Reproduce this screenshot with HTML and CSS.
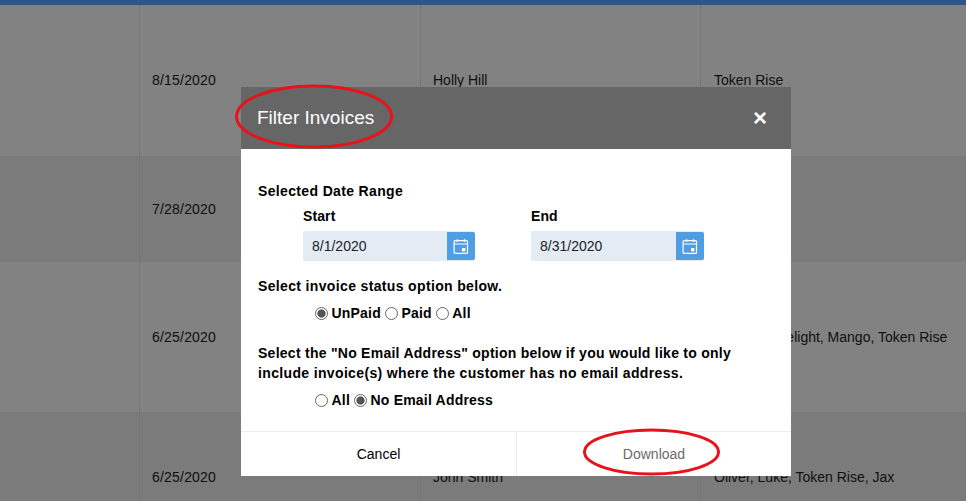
FILE: index.html
```html
<!DOCTYPE html>
<html lang="en">
<head>
  <meta charset="UTF-8" />
  <title>Filter Invoices</title>
  <link rel="stylesheet" href="styles.css">
</head>
<body>
  <div class="topbar"></div>

  <div class="table">
    <div class="row row-a">
      <div class="cell"></div>
      <div class="cell date">8/15/2020</div>
      <div class="cell">Holly Hill</div>
      <div class="cell">Token Rise</div>
    </div>
    <div class="row row-b">
      <div class="cell"></div>
      <div class="cell date">7/28/2020</div>
      <div class="cell"></div>
      <div class="cell"></div>
    </div>
    <div class="row row-c">
      <div class="cell"></div>
      <div class="cell date">6/25/2020</div>
      <div class="cell"></div>
      <div class="cell">Peaches, Delight, Mango, Token Rise</div>
    </div>
    <div class="row row-d">
      <div class="cell"></div>
      <div class="cell date">6/25/2020</div>
      <div class="cell">John Smith</div>
      <div class="cell">Oliver, Luke, Token Rise, Jax</div>
    </div>
  </div>

  <div class="backdrop"></div>

  <div class="modal">
    <div class="modal-header">
      <span class="modal-title">Filter Invoices</span>
      <span class="modal-close">&times;</span>
    </div>

    <div class="modal-body">
      <div class="label">Selected Date Range</div>
      <div class="dates">
        <div class="date-field">
          <div class="label">Start</div>
          <div class="date-input">
            <span class="date-value">8/1/2020</span>
            <span class="date-btn">
              <svg width="16" height="17" viewBox="0 0 16 17" fill="none" stroke="#fff" stroke-width="1.2">
                <rect x="1.1" y="2.6" width="13.4" height="12.8" rx="1" />
                <path d="M1.1 6h13.4M4.5 1v3M11.5 1v3" />
                <rect x="9" y="10" width="3.4" height="3.4" fill="#fff" stroke="none" />
              </svg>
            </span>
          </div>
        </div>
        <div class="date-field">
          <div class="label">End</div>
          <div class="date-input">
            <span class="date-value">8/31/2020</span>
            <span class="date-btn">
              <svg width="16" height="17" viewBox="0 0 16 17" fill="none" stroke="#fff" stroke-width="1.2">
                <rect x="1.1" y="2.6" width="13.4" height="12.8" rx="1" />
                <path d="M1.1 6h13.4M4.5 1v3M11.5 1v3" />
                <rect x="9" y="10" width="3.4" height="3.4" fill="#fff" stroke="none" />
              </svg>
            </span>
          </div>
        </div>
      </div>

      <div class="label status-label">Select invoice status option below.</div>
      <div class="options status-options">
        <label><input type="radio" name="status" checked /> UnPaid</label>
        <label><input type="radio" name="status" /> Paid</label>
        <label><input type="radio" name="status" /> All</label>
      </div>

      <div class="label email-label">
        <span class="tight">Select the "No Email Address" option below if you would like to only</span><br>
        include invoice(s) where the customer has no email address.
      </div>
      <div class="options email-options">
        <label><input type="radio" name="email" /> All</label>
        <label><input type="radio" name="email" checked /> No Email Address</label>
      </div>
    </div>

    <div class="modal-footer">
      <div class="footer-btn">Cancel</div>
      <div class="footer-btn disabled">Download</div>
    </div>
  </div>

  <svg class="marks" width="966" height="501" viewBox="0 0 966 501" fill="none" stroke="#e8121a" stroke-width="3">
    <ellipse cx="314" cy="116.5" rx="77.5" ry="30.5" />
    <ellipse cx="651.5" cy="452" rx="67" ry="22" />
  </svg>
</body>
</html>
```

FILE: styles.css
```css
html, body {
  height: 100%;
}

body {
  margin: 0;
  overflow: hidden;
  background: #fff;
  color: #000;
  font-family: "Liberation Sans", Arial, sans-serif;
  font-size: 14px;
}

.topbar {
  height: 5px;
  background: #56acff;
}

.row {
  display: grid;
  grid-template-columns: 140px 281px 280px 1fr;
  white-space: nowrap;
}
.row-a { height: 151px; }
.row-b { height: 106px; background: #f1f1f1; }
.row-c { height: 150px; }
.row-d { height: 89px; background: #f1f1f1; }

.cell {
  display: flex;
  align-items: center;
  padding-left: 12px;
  border-right: 1px solid #e6e6e6;
  box-sizing: border-box;
  color: #222;
}
.cell:first-child {
  padding-left: 0;
}
.cell:last-child {
  border-right: none;
  padding-left: 13px;
}
.cell.date {
  letter-spacing: 0.2px;
}
.row-a .cell {
  padding-bottom: 1px;
}
.row-d .cell {
  align-items: flex-start;
  padding-top: 57px;
}

.backdrop {
  position: fixed;
  inset: 0;
  background: rgba(0, 0, 0, 0.49);
}

.modal {
  position: fixed;
  left: 241px;
  top: 87px;
  width: 550px;
  height: 389px;
  display: flex;
  flex-direction: column;
  background: #fff;
}

.modal-header {
  height: 62px;
  flex: none;
  display: flex;
  align-items: center;
  justify-content: space-between;
  padding: 0 24px 0 16px;
  background: #666;
  color: #fff;
}
.modal-title {
  font-size: 19px;
}
.modal-close {
  font-size: 24px;
  font-weight: 700;
  line-height: 1;
}

.modal-body {
  flex: 1;
  padding: 32px 17px 0;
}

.label {
  font-weight: 700;
  letter-spacing: 0.35px;
  line-height: 20px;
}
.label .tight {
  letter-spacing: 0.26px;
}

.dates {
  display: flex;
  gap: 56px;
  padding: 5px 0 0 45px;
}
.date-field .label {
  letter-spacing: 0.1px;
}

.date-input {
  width: 172px;
  height: 30px;
  margin-top: 5px;
  display: flex;
  align-items: center;
  justify-content: space-between;
  background: #e3ecf5;
  border-radius: 2px;
}
.date-field:last-child .date-input {
  width: 173px;
}
.date-value {
  padding-left: 9px;
  color: #222;
}
.date-btn {
  width: 28px;
  height: 28px;
  display: flex;
  align-items: center;
  justify-content: center;
  background: #4f9de3;
  border-radius: 0 2px 2px 0;
}

.status-label {
  margin-top: 15px;
}
.email-label {
  margin-top: 20px;
}

.options {
  display: flex;
  gap: 4px;
  margin-top: 7px;
  padding-left: 57px;
  font-weight: 700;
  letter-spacing: 0.2px;
  line-height: 20px;
}
.options label {
  display: flex;
  align-items: center;
  gap: 3.5px;
}
.options input {
  appearance: none;
  width: 13px;
  height: 13px;
  margin: 0;
  border: 1px solid #666;
  border-radius: 50%;
  background: #fff;
}
.options input:checked {
  background: radial-gradient(circle, #555 0 3.8px, #fff 4.4px);
}

.modal-footer {
  height: 45px;
  flex: none;
  display: grid;
  grid-template-columns: 276px 1fr;
  border-top: 1px solid #ececec;
  box-sizing: border-box;
}
.footer-btn {
  display: flex;
  align-items: center;
  justify-content: center;
}
.footer-btn:first-child {
  border-right: 1px solid #ececec;
}
.footer-btn.disabled {
  color: #6b6b6b;
}

.marks {
  position: fixed;
  left: 0;
  top: 0;
}
```
